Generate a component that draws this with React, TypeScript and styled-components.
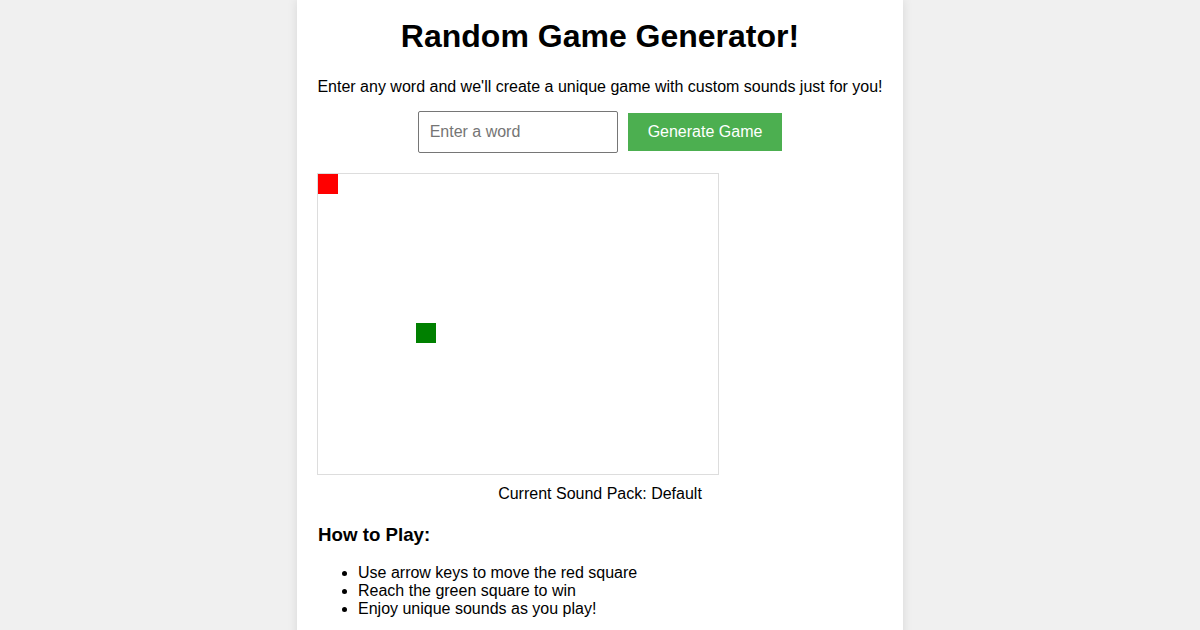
import React from "react";
import styled, { createGlobalStyle } from "styled-components";

const Global = createGlobalStyle`
  html, body { margin: 0; padding: 0; }
  body {
    background: #f0f0f0;
    font-family: "Liberation Sans", Arial, sans-serif;
    color: #000;
  }
`;

const Container = styled.div`
  width: 566px;
  margin: 0 auto;
  padding: 0 20px 20px;
  background: #fff;
  box-shadow: 0 0 10px rgba(0, 0, 0, 0.1);
  min-height: 630px;
  box-sizing: content-box;
`;

const Title = styled.h1`
  margin: 0;
  padding-top: 18px;
  font-size: 32px;
  line-height: 37px;
  text-align: center;
`;

const Subtitle = styled.p`
  margin: 23px 0 0;
  font-size: 16px;
  line-height: 18px;
  text-align: center;
`;

const Controls = styled.div`
  display: flex;
  justify-content: center;
  align-items: center;
  gap: 10px;
  margin-top: 15px;
`;

const Input = styled.input`
  width: 200px;
  height: 42px;
  box-sizing: border-box;
  padding: 10px 10px 10px 11px;
  font-size: 16px;
  font-family: "Liberation Sans", Arial, sans-serif;
  border: 1px solid #767676;
  border-radius: 2px;
  &::placeholder { color: #757575; }
`;

const Button = styled.button`
  height: 38px;
  padding: 0 20px;
  background: #4caf50;
  color: #fff;
  border: none;
  font-size: 16px;
  font-family: "Liberation Sans", Arial, sans-serif;
  cursor: pointer;
`;

const Board = styled.div`
  position: relative;
  width: 400px;
  height: 300px;
  border: 1px solid #ddd;
  margin-top: 20px;
`;

const Square = styled.div<{ $color: string; $x: number; $y: number }>`
  position: absolute;
  width: 20px;
  height: 20px;
  background: ${(p) => p.$color};
  left: ${(p) => p.$x}px;
  top: ${(p) => p.$y}px;
`;

const SoundPack = styled.div`
  margin-top: 10px;
  font-size: 16px;
  line-height: 18px;
  text-align: center;
`;

const HowTitle = styled.h3`
  margin: 21px 0 0 1px;
  font-size: 18.72px;
  line-height: 22px;
`;

const List = styled.ul`
  margin: 18px 0 0;
  padding-left: 41px;
  font-size: 16px;
  line-height: 18px;
`;

export default function App() {
  return (
    <>
      <Global />
      <Container>
        <Title>Random Game Generator!</Title>
        <Subtitle>Enter any word and we'll create a unique game with custom sounds just for you!</Subtitle>
        <Controls>
          <Input placeholder="Enter a word" />
          <Button>Generate Game</Button>
        </Controls>
        <Board>
          <Square $color="#ff0000" $x={0} $y={0} />
          <Square $color="#008000" $x={98} $y={149} />
        </Board>
        <SoundPack>Current Sound Pack: Default</SoundPack>
        <HowTitle>How to Play:</HowTitle>
        <List>
          <li>Use arrow keys to move the red square</li>
          <li>Reach the green square to win</li>
          <li>Enjoy unique sounds as you play!</li>
        </List>
      </Container>
    </>
  );
}
